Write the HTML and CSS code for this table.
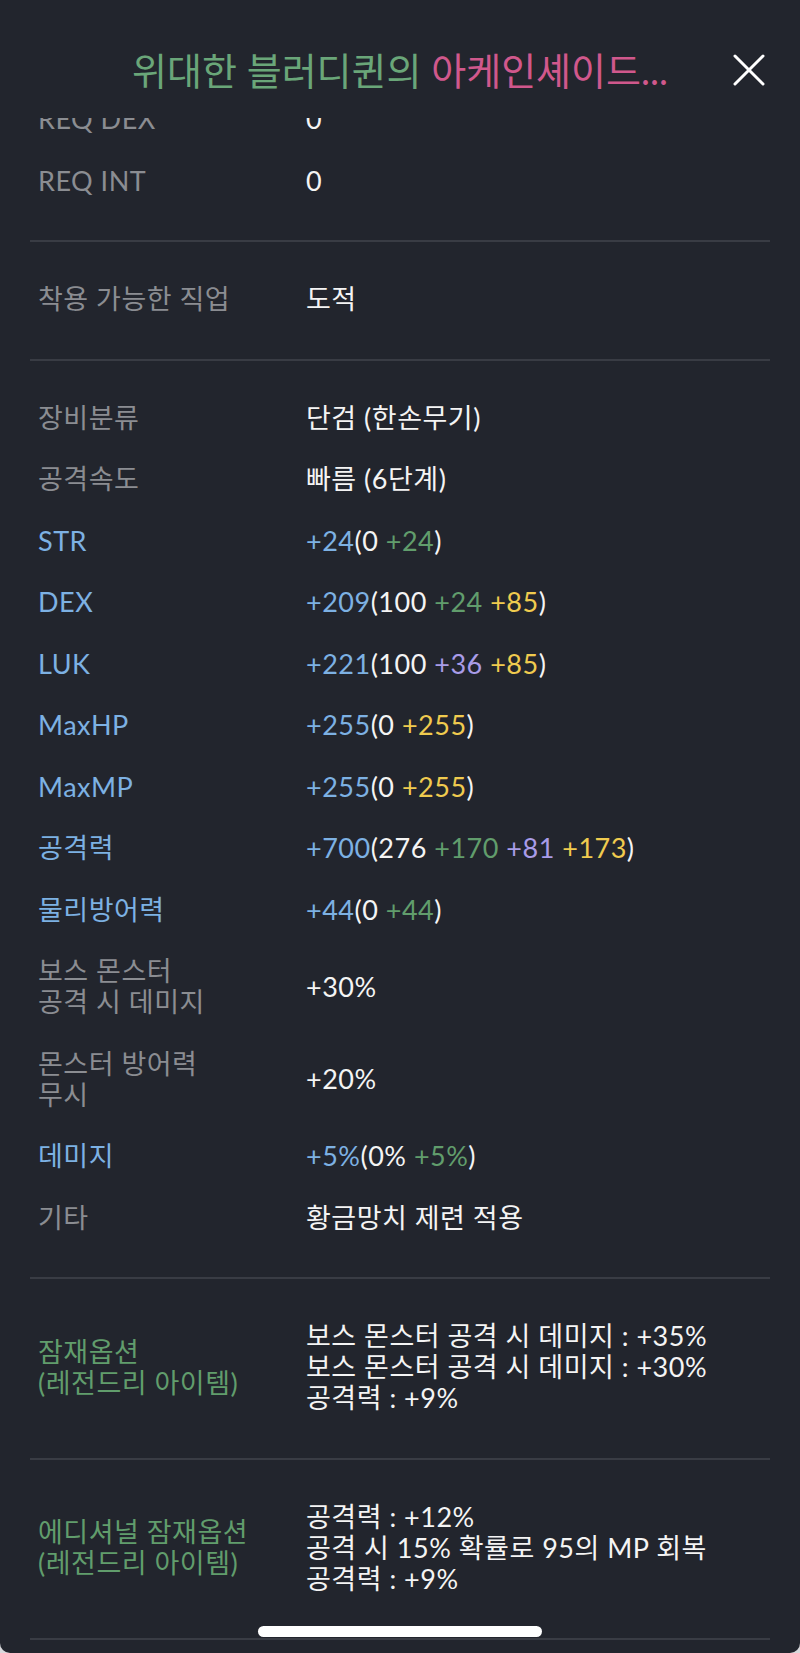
FILE: index.html
```html
<!DOCTYPE html>
<html>
	<head>
		<meta charset="UTF-8">
		<title>아이템 상세</title>
		<meta name="viewport" content="width=device-width initial-scale=1 user-scalable=no" />
		<link rel="stylesheet" href="styles.css">
	</head>
	<body>
		<div class="header">
			<div></div>
			<h1 class="title"><span class="t_green">위대한 블러디퀸의</span> <span class="t_pink">아케인셰이드...</span></h1>
			<button class="close_btn">
				<svg width="32" height="32" viewBox="0 0 32 32">
					<path d="M2 2 L30 30 M30 2 L2 30" stroke="#fff" stroke-width="3" stroke-linecap="round" fill="none"/>
				</svg>
			</button>
		</div>
		<div class="scroll_box">
			<div class="content">
				<div class="section">
					<div class="row"><div class="label">REQ DEX</div><div class="value">0</div></div>
					<div class="row"><div class="label">REQ INT</div><div class="value">0</div></div>
				</div>
				<div class="section">
					<div class="row"><div class="label">착용 가능한 직업</div><div class="value">도적</div></div>
				</div>
				<div class="section">
					<div class="row"><div class="label">장비분류</div><div class="value">단검 (한손무기)</div></div>
					<div class="row"><div class="label">공격속도</div><div class="value">빠름 (6단계)</div></div>
					<div class="row"><div class="label blue">STR</div><div class="value"><span class="blue">+24</span>(0 <span class="green">+24</span>)</div></div>
					<div class="row"><div class="label blue">DEX</div><div class="value"><span class="blue">+209</span>(100 <span class="green">+24</span> <span class="yellow">+85</span>)</div></div>
					<div class="row"><div class="label blue">LUK</div><div class="value"><span class="blue">+221</span>(100 <span class="purple">+36</span> <span class="yellow">+85</span>)</div></div>
					<div class="row"><div class="label blue">MaxHP</div><div class="value"><span class="blue">+255</span>(0 <span class="yellow">+255</span>)</div></div>
					<div class="row"><div class="label blue">MaxMP</div><div class="value"><span class="blue">+255</span>(0 <span class="yellow">+255</span>)</div></div>
					<div class="row"><div class="label blue">공격력</div><div class="value"><span class="blue">+700</span>(276 <span class="green">+170</span> <span class="purple">+81</span> <span class="yellow">+173</span>)</div></div>
					<div class="row"><div class="label blue">물리방어력</div><div class="value"><span class="blue">+44</span>(0 <span class="green">+44</span>)</div></div>
					<div class="row"><div class="label">보스 몬스터<br>공격 시 데미지</div><div class="value">+30%</div></div>
					<div class="row"><div class="label">몬스터 방어력<br>무시</div><div class="value">+20%</div></div>
					<div class="row"><div class="label blue">데미지</div><div class="value"><span class="blue">+5%</span>(0% <span class="green">+5%</span>)</div></div>
					<div class="row"><div class="label">기타</div><div class="value">황금망치 제련 적용</div></div>
				</div>
				<div class="section">
					<div class="row">
						<div class="label green">잠재옵션<br>(레전드리 아이템)</div>
						<div class="value">보스 몬스터 공격 시 데미지 : +35%<br>보스 몬스터 공격 시 데미지 : +30%<br>공격력 : +9%</div>
					</div>
				</div>
				<div class="section">
					<div class="row">
						<div class="label green">에디셔널 잠재옵션<br>(레전드리 아이템)</div>
						<div class="value">공격력 : +12%<br>공격 시 15% 확률로 95의 MP 회복<br>공격력 : +9%</div>
					</div>
				</div>
			</div>
		</div>
		<div class="home_bar"></div>
	</body>
</html>
```

FILE: styles.css
```css
html,body,div,h1{margin: 0; padding: 0;}
html{background: #d8d9dc;}
body{
	width: 800px;
	height: 1653px;
	background: #22252d;
	color: #f4f4f4;
	font-family: Lato, "Noto Sans CJK KR", sans-serif;
	font-size: 27px;
	display: flex;
	flex-direction: column;
	overflow: hidden;
	position: relative;
	border-radius: 0 0 10px 10px;
}
.header{
	height: 118px;
	flex: none;
	display: grid;
	grid-template-columns: 1fr auto 1fr;
	align-items: start;
	padding-top: 47px;
	box-sizing: border-box;
	background: #22252d;
}
.title{
	font-size: 38px;
	font-weight: normal;
	line-height: 46px;
	white-space: nowrap;
}
.t_green{color: #6aa679;}
.t_pink{color: #d0588c;}
.close_btn{
	justify-self: end;
	margin-right: 35px;
	margin-top: 7px;
	width: 32px;
	height: 32px;
	padding: 0;
	border: none;
	background: none;
}
.close_btn svg{display: block;}
.scroll_box{
	flex: 1;
	overflow: hidden;
}
.content{
	margin-top: -30px;
}
.section{
	margin: 0 30px;
	padding: 26px 0 29px;
	border-bottom: 2px solid #393c44;
}
.section:first-child{
	padding-top: 0;
}
.row{
	display: grid;
	grid-template-columns: 268px 1fr;
	align-items: center;
	padding: 15.25px 0 15.25px 8px;
	line-height: 31px;
	letter-spacing: 0.5px;
}
.label{
	color: #8b8d92;
}
.value{
	color: #f4f4f4;
}
.blue{color: #7db1e3;}
.green{color: #619d6c;}
.yellow{color: #f0cb4f;}
.purple{color: #a99ce8;}
.home_bar{
	position: absolute;
	left: 258px;
	bottom: 16px;
	width: 284px;
	height: 11px;
	border-radius: 6px;
	background: #fff;
}
```
